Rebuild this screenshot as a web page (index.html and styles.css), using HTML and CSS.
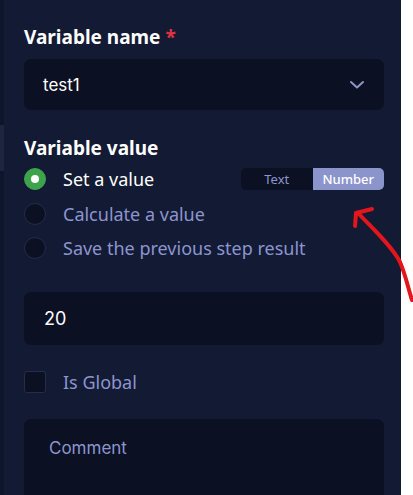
FILE: index.html
```html
<!DOCTYPE html>
<html>
<head>
<meta charset="utf-8">
<link rel="stylesheet" href="styles.css">
</head>
<body>
<div class="panel">
  <div class="strip"><div class="thumb"></div></div>
  <div class="form">
    <div class="label label-first">Variable name <span class="req">*</span></div>
    <div class="field select">
      <span class="value">test1</span>
      <svg class="chev" width="16" height="10" viewBox="0 0 16 10"><path d="M2 2 L8 7.5 L14 2" fill="none" stroke="#8e96c6" stroke-width="2" stroke-linecap="round" stroke-linejoin="round"/></svg>
    </div>
    <div class="label label-second">Variable value</div>
    <div class="radios">
      <div class="radio-row">
        <span class="radio on"><span class="dot"></span></span>
        <span class="rtext active">Set a value</span>
        <div class="toggle">
          <span class="seg">Text</span>
          <span class="seg sel">Number</span>
        </div>
      </div>
      <div class="radio-row">
        <span class="radio"></span>
        <span class="rtext">Calculate a value</span>
      </div>
      <div class="radio-row">
        <span class="radio"></span>
        <span class="rtext">Save the previous step result</span>
      </div>
    </div>
    <div class="field num"><span class="value">20</span></div>
    <div class="check-row">
      <span class="check"></span>
      <span class="rtext">Is Global</span>
    </div>
    <div class="field comment"><span class="placeholder">Comment</span></div>
  </div>
</div>
<svg class="arrow" width="70" height="110" viewBox="345 200 70 110">
  <path d="M358 213 C372 228 392 246 400 262 C406 276 408 288 412 300" fill="none" stroke="#e3161c" stroke-width="4" stroke-linecap="round"/>
  <path d="M355 226 L356 213 L372 209" fill="none" stroke="#e3161c" stroke-width="4" stroke-linecap="round" stroke-linejoin="round"/>
</svg>
</body>
</html>
```
FILE: styles.css
```css
html, body {
  margin: 0;
  padding: 0;
  background: #ffffff;
}
body {
  width: 413px;
  height: 495px;
  overflow: hidden;
  position: relative;
}
.panel {
  width: 401px;
  height: 495px;
  background: #131a33;
  display: flex;
}
.strip {
  width: 4px;
  background: #0e1429;
  display: flex;
  flex-direction: column;
}
.thumb {
  margin-top: 125px;
  height: 46px;
  background: #1e2540;
}
.form {
  flex: 1;
  padding: 0 17px 0 20px;
  display: flex;
  flex-direction: column;
  font-family: "Noto Sans", "Open Sans", sans-serif;
}
.form > * { flex-shrink: 0; }
.label {
  color: #ffffff;
  font-weight: 700;
  font-size: 19px;
  line-height: 24px;
  height: 24px;
}
.label-first { margin-top: 25px; }
.label-second { margin-top: 26px; }
.req { color: #e0333e; }
.field {
  background: #0b1023;
  border-radius: 7px;
  display: flex;
  align-items: center;
  box-sizing: border-box;
}
.select {
  margin-top: 10px;
  height: 51px;
  padding: 0 19px 0 19px;
  justify-content: space-between;
}
.value {
  color: #ffffff;
  font-family: Inter, "Noto Sans", sans-serif;
  font-size: 17px;
}
.chev { display: block; }
.radios {
  margin-top: 2px;
  display: flex;
  flex-direction: column;
}
.radio-row {
  height: 34.5px;
  display: flex;
  align-items: center;
}
.radio {
  width: 22px;
  height: 22px;
  border-radius: 50%;
  box-sizing: border-box;
  border: 1.5px solid #252c48;
  background: #0b1023;
  display: flex;
  align-items: center;
  justify-content: center;
  flex: none;
}
.radio.on {
  background: #3da34c;
  border-color: #3da34c;
}
.dot {
  width: 8px;
  height: 8px;
  border-radius: 50%;
  background: #ffffff;
}
.rtext {
  margin-left: 17px;
  font-size: 18px;
  color: #8c95cf;
}
.rtext.active { color: #ffffff; }
.toggle {
  margin-left: auto;
  display: flex;
  height: 22px;
  border-radius: 5px;
  overflow: hidden;
  background: #0b1023;
}
.seg {
  width: 71.5px;
  display: flex;
  align-items: center;
  justify-content: center;
  font-size: 13px;
  color: #8c95cf;
}
.seg.sel {
  background: #8b94cb;
  color: #ffffff;
  font-weight: 500;
}
.num {
  margin-top: 26px;
  height: 53px;
  padding: 0 20px;
}
.num .value { font-size: 18px; }
.check-row {
  margin-top: 26px;
  height: 22px;
  display: flex;
  align-items: center;
}
.check {
  width: 22px;
  height: 22px;
  box-sizing: border-box;
  border: 1.5px solid #262d4a;
  border-radius: 3px;
  background: #0b1023;
}
.comment {
  margin-top: 26px;
  height: 90px;
  align-items: flex-start;
  padding: 19px 25px;
  border-radius: 7px 7px 0 0;
}
.placeholder {
  font-family: Inter, "Noto Sans", sans-serif;
  font-size: 17px;
  color: #8c95cf;
}
.arrow {
  position: absolute;
  left: 345px;
  top: 200px;
}
```
